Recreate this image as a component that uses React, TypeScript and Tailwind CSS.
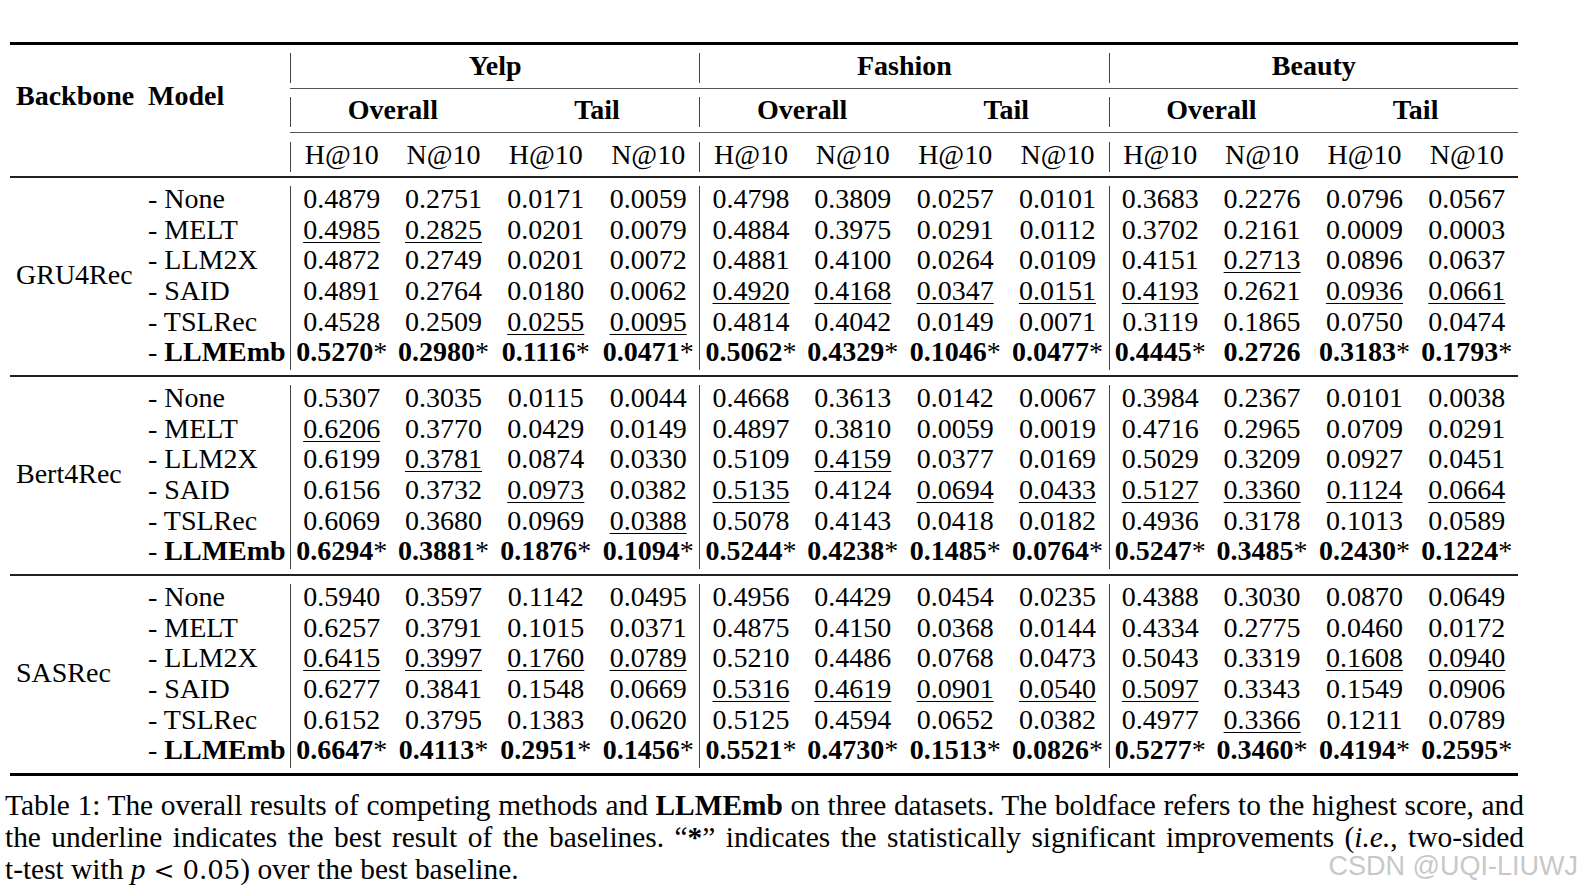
import React from "react";

type Row = { name: string; vals: string[] };
type Group = { backbone: string; rows: Row[] };

const groups: Group[] = [
  {
    backbone: "GRU4Rec",
    rows: [
      { name: "None", vals: "0.4879 0.2751 0.0171 0.0059 0.4798 0.3809 0.0257 0.0101 0.3683 0.2276 0.0796 0.0567".split(" ") },
      { name: "MELT", vals: "_0.4985 _0.2825 0.0201 0.0079 0.4884 0.3975 0.0291 0.0112 0.3702 0.2161 0.0009 0.0003".split(" ") },
      { name: "LLM2X", vals: "0.4872 0.2749 0.0201 0.0072 0.4881 0.4100 0.0264 0.0109 0.4151 _0.2713 0.0896 0.0637".split(" ") },
      { name: "SAID", vals: "0.4891 0.2764 0.0180 0.0062 _0.4920 _0.4168 _0.0347 _0.0151 _0.4193 0.2621 _0.0936 _0.0661".split(" ") },
      { name: "TSLRec", vals: "0.4528 0.2509 _0.0255 _0.0095 0.4814 0.4042 0.0149 0.0071 0.3119 0.1865 0.0750 0.0474".split(" ") },
      { name: "LLMEmb", vals: "0.5270* 0.2980* 0.1116* 0.0471* 0.5062* 0.4329* 0.1046* 0.0477* 0.4445* 0.2726 0.3183* 0.1793*".split(" ") },
    ],
  },
  {
    backbone: "Bert4Rec",
    rows: [
      { name: "None", vals: "0.5307 0.3035 0.0115 0.0044 0.4668 0.3613 0.0142 0.0067 0.3984 0.2367 0.0101 0.0038".split(" ") },
      { name: "MELT", vals: "_0.6206 0.3770 0.0429 0.0149 0.4897 0.3810 0.0059 0.0019 0.4716 0.2965 0.0709 0.0291".split(" ") },
      { name: "LLM2X", vals: "0.6199 _0.3781 0.0874 0.0330 0.5109 _0.4159 0.0377 0.0169 0.5029 0.3209 0.0927 0.0451".split(" ") },
      { name: "SAID", vals: "0.6156 0.3732 _0.0973 0.0382 _0.5135 0.4124 _0.0694 _0.0433 _0.5127 _0.3360 _0.1124 _0.0664".split(" ") },
      { name: "TSLRec", vals: "0.6069 0.3680 0.0969 _0.0388 0.5078 0.4143 0.0418 0.0182 0.4936 0.3178 0.1013 0.0589".split(" ") },
      { name: "LLMEmb", vals: "0.6294* 0.3881* 0.1876* 0.1094* 0.5244* 0.4238* 0.1485* 0.0764* 0.5247* 0.3485* 0.2430* 0.1224*".split(" ") },
    ],
  },
  {
    backbone: "SASRec",
    rows: [
      { name: "None", vals: "0.5940 0.3597 0.1142 0.0495 0.4956 0.4429 0.0454 0.0235 0.4388 0.3030 0.0870 0.0649".split(" ") },
      { name: "MELT", vals: "0.6257 0.3791 0.1015 0.0371 0.4875 0.4150 0.0368 0.0144 0.4334 0.2775 0.0460 0.0172".split(" ") },
      { name: "LLM2X", vals: "_0.6415 _0.3997 _0.1760 _0.0789 0.5210 0.4486 0.0768 0.0473 0.5043 0.3319 _0.1608 _0.0940".split(" ") },
      { name: "SAID", vals: "0.6277 0.3841 0.1548 0.0669 _0.5316 _0.4619 _0.0901 _0.0540 _0.5097 0.3343 0.1549 0.0906".split(" ") },
      { name: "TSLRec", vals: "0.6152 0.3795 0.1383 0.0620 0.5125 0.4594 0.0652 0.0382 0.4977 _0.3366 0.1211 0.0789".split(" ") },
      { name: "LLMEmb", vals: "0.6647* 0.4113* 0.2951* 0.1456* 0.5521* 0.4730* 0.1513* 0.0826* 0.5277* 0.3460* 0.4194* 0.2595*".split(" ") },
    ],
  },
];

function Num({ v, bold }: { v: string; bold: boolean }) {
  let s = v;
  const u = s.startsWith("_");
  if (u) s = s.slice(1);
  const star = s.endsWith("*");
  if (star) s = s.slice(0, -1);
  return (
    <span className={bold ? "font-bold" : ""}>
      <span className={u ? "underline decoration-1 underline-offset-[3px]" : ""}>{s}</span>
      {star && <span className="font-normal">*</span>}
    </span>
  );
}

const Midrule = () => (
  <div className="flex flex-col">
    <div className="h-[5px]" />
    <div className="h-[2px] bg-[#222]" />
    <div className="h-[8px]" />
  </div>
);

export default function App() {
  const datasets = ["Yelp", "Fashion", "Beauty"];
  const subs = ["Overall", "Tail", "Overall", "Tail", "Overall", "Tail"];
  const metrics = ["H@10", "N@10", "H@10", "N@10", "H@10", "N@10", "H@10", "N@10", "H@10", "N@10", "H@10", "N@10"];
  return (
    <div className="relative w-[1579px] h-[895px] overflow-hidden bg-white text-black font-['Liberation_Serif','Times_New_Roman',serif]">
      <div className="ml-[10px] w-[1508px] pt-[42px] text-[28px] leading-[26px]">
        <div className="h-[3px] bg-black" />
        <div className="grid grid-cols-[132px_148px_1228px]">
          <div className="pl-[6px] pt-[38px] font-bold">Backbone</div>
          <div className="pl-[6px] pt-[38px] font-bold">Model</div>
          <div className="flex flex-col">
            <div className="h-[8px]" />
            <div className="grid grid-cols-[repeat(3,409.333px)]">
              {datasets.map((d) => (
                <div key={d} className="h-[30px] border-l border-[#444] text-center font-bold">{d}</div>
              ))}
            </div>
            <div className="h-[5px]" />
            <div className="h-[1px] bg-[#555]" />
            <div className="h-[8px]" />
            <div className="grid grid-cols-[repeat(6,204.667px)]">
              {subs.map((d, i) => (
                <div key={i} className={`h-[30px] text-center font-bold ${i % 2 === 0 ? "border-l border-[#444]" : ""}`}>{d}</div>
              ))}
            </div>
            <div className="h-[5px]" />
            <div className="h-[1px] bg-[#555]" />
            <div className="h-[9px]" />
            <div className="grid grid-cols-[repeat(12,102.333px)]">
              {metrics.map((d, i) => (
                <div key={i} className={`h-[30px] text-center ${i % 4 === 0 ? "border-l border-[#444]" : ""}`}>{d}</div>
              ))}
            </div>
            <div className="h-[4px]" />
          </div>
        </div>
        <div className="h-[2px] bg-[#222]" />
        <div className="h-[8px]" />
        {groups.map((g, gi) => (
          <div key={g.backbone}>
            {gi > 0 && <Midrule />}
            <div className="flex">
              <div className="w-[132px] flex items-center pl-[6px] pb-[6px]">{g.backbone}</div>
              <div className="grid grid-cols-[148px_repeat(12,102.333px)]">
                {g.rows.map((r) => {
                  const bold = r.name === "LLMEmb";
                  return (
                    <React.Fragment key={r.name}>
                      <div className="h-[30.667px] pl-[6px] whitespace-nowrap">
                        - {bold ? <span className="font-bold">{r.name}</span> : r.name}
                      </div>
                      {r.vals.map((v, i) => (
                        <div key={i} className={`h-[30.667px] text-center whitespace-nowrap ${i % 4 === 0 ? "border-l border-[#444]" : ""}`}>
                          <Num v={v} bold={bold} />
                        </div>
                      ))}
                    </React.Fragment>
                  );
                })}
              </div>
            </div>
          </div>
        ))}
        <div className="h-[5px]" />
        <div className="h-[3px] bg-black" />
      </div>
      <div className="ml-[5px] mt-[13px] w-[1519px] text-[29.4px] leading-[32px]">
        <div className="text-justify [text-align-last:justify] whitespace-nowrap">
          Table 1: The overall results of competing methods and <span className="font-bold">LLMEmb</span> on three datasets. The boldface refers to the highest score, and
        </div>
        <div className="text-justify [text-align-last:justify] whitespace-nowrap">
          the underline indicates the best result of the baselines. “<span className="font-bold">*</span>” indicates the statistically significant improvements (<span className="italic">i.e.</span>, two-sided
        </div>
        <div className="whitespace-nowrap">
          t-test with <span className="italic">p</span>
          <span className="mx-[8px] font-['DejaVu_Serif',serif] text-[25px] font-light">&lt;</span>
          <span className="font-['DejaVu_Serif',serif] text-[26px] font-light">0.05</span>) over the best baseline.
        </div>
      </div>
      <div className="absolute right-[1px] top-[851px] font-['Liberation_Sans',Arial,sans-serif] text-[27px] leading-[30px] text-[#c8c8c8]">
        CSDN @UQI-LIUWJ
      </div>
    </div>
  );
}
